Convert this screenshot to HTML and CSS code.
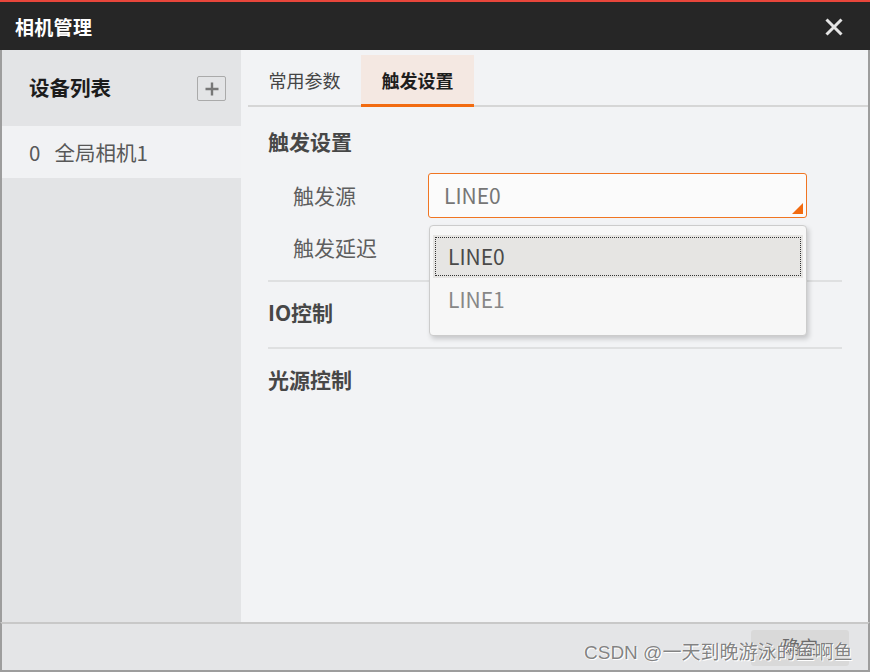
FILE: index.html
```html
<!DOCTYPE html>
<html lang="zh-CN">
<head>
<meta charset="utf-8">
<title>相机管理</title>
<link rel="stylesheet" href="styles.css">
</head>
<body>
<div class="window">
  <div class="titlebar">
    <span class="title">相机管理</span>
    <svg class="close" width="20" height="20" viewBox="0 0 20 20"><path d="M2.5 2.5 L17.5 17.5 M17.5 2.5 L2.5 17.5" stroke="#e4e4e4" stroke-width="3" stroke-linecap="butt"/></svg>
  </div>
  <div class="main">
    <aside class="sidebar">
      <div class="side-head">
        <span class="side-title">设备列表</span>
        <span class="add-btn"><svg width="16" height="16" viewBox="0 0 16 16"><path d="M8 1.5 V14.5 M1.5 8 H14.5" stroke="#777" stroke-width="2.4"/></svg></span>
      </div>
      <div class="side-item"><span class="idx">0</span><span>全局相机1</span></div>
    </aside>
    <section class="content">
      <div class="tabs">
        <div class="tab">常用参数</div>
        <div class="tab active">触发设置</div>
      </div>
      <div class="group first">
        <div class="group-title">触发设置</div>
        <div class="row">
          <span class="label">触发源</span>
          <div class="select-wrap">
            <div class="select"><span>LINE0</span><span class="corner"></span></div>
            <div class="popup">
              <div class="opt selected">LINE0</div>
              <div class="opt">LINE1</div>
            </div>
          </div>
        </div>
        <div class="row">
          <span class="label">触发延迟</span>
        </div>
      </div>
      <div class="sep"></div>
      <div class="group">
        <div class="group-title">IO控制</div>
      </div>
      <div class="sep"></div>
      <div class="group">
        <div class="group-title">光源控制</div>
      </div>
    </section>
  </div>
  <div class="footer">
    <button class="ok">确定</button>
    <span class="watermark">CSDN @一天到晚游泳的鱼啊鱼</span>
  </div>
</div>
</body>
</html>
```

FILE: styles.css
```css
* { box-sizing: border-box; }
html, body { margin: 0; padding: 0; }
body {
  width: 870px;
  height: 672px;
  overflow: hidden;
  font-family: "Noto Sans CJK SC", "Noto Sans", sans-serif;
  background: #e4e5e7;
}
.window {
  width: 870px;
  height: 672px;
  display: flex;
  flex-direction: column;
  border-top: 2px solid #e8463b;
}
.titlebar {
  height: 48px;
  flex: none;
  background: #262626;
  display: flex;
  align-items: center;
  justify-content: space-between;
  padding: 0 26px 0 15px;
}
.title {
  color: #ffffff;
  font-size: 19px;
  font-weight: 700;
  letter-spacing: 0.3px;
}
.close { display: block; margin-top: 1px; }
.main {
  height: 572px;
  flex: none;
  display: flex;
  border-left: 2px solid #9d9d9d;
  border-right: 2px solid #9d9d9d;
}
.sidebar {
  width: 239px;
  flex: none;
  background: #e3e4e6;
}
.side-head {
  height: 76px;
  display: flex;
  align-items: center;
  justify-content: space-between;
  padding: 0 15px 0 27px;
}
.side-title {
  font-size: 20.5px;
  font-weight: 700;
  color: #1c1c1c;
  margin-top: -2px;
}
.add-btn {
  width: 29px;
  height: 25px;
  border: 1.5px solid #aaaaaa;
  border-radius: 2px;
  display: flex;
  align-items: center;
  justify-content: center;
  margin-top: 1px;
}
.add-btn svg { display: block; }
.side-item {
  height: 52px;
  background: #f1f2f4;
  display: flex;
  align-items: center;
  padding-left: 27px;
  font-size: 20.5px;
  color: #585858;
  gap: 14px;
}
.content {
  flex: 1;
  background: #f2f3f5;
  display: flex;
  flex-direction: column;
}
.tabs {
  height: 57px;
  display: flex;
  align-items: flex-end;
  margin-left: 7px;
  margin-right: 0;
  border-bottom: 2px solid #d6d6d6;
}
.tab {
  height: 52px;
  padding: 0 20.5px;
  display: flex;
  align-items: center;
  font-size: 18px;
  color: #444;
  border-bottom: 3px solid transparent;
  margin-bottom: -2px;
}
.tab.active {
  background: #f4e8e2;
  border-bottom-color: #f26b10;
  color: #1e1e1e;
  font-weight: 700;
}
.group {
  margin: 0 26px 0 27px;
  padding: 12px 0 13px;
}
.group.first {
  padding: 16px 0 7px;
}
.group-title {
  height: 40px;
  line-height: 37px;
  font-size: 21px;
  font-weight: 700;
  color: #474747;
}
.group.first .group-title { margin-bottom: 6px; }
.row {
  height: 52px;
  display: flex;
  align-items: center;
  padding-left: 25px;
}
.label {
  width: 135px;
  flex: none;
  font-size: 21px;
  color: #5e5e5e;
}
.select-wrap {
  position: relative;
  width: 379px;
}
.select {
  height: 45px;
  border: 1.5px solid #f07522;
  border-radius: 3px;
  background: #fbfbfb;
  display: flex;
  align-items: center;
  padding-left: 15px;
  font-size: 21px;
  color: #767676;
  position: relative;
}
.corner {
  position: absolute;
  right: 3px;
  bottom: 3px;
  width: 0;
  height: 0;
  border-left: 11px solid transparent;
  border-bottom: 11px solid #f26b10;
}
.popup {
  position: absolute;
  left: 1px;
  top: 52px;
  width: 378px;
  height: 111px;
  background: #f7f7f7;
  border: 1px solid #cccccc;
  border-radius: 4px;
  box-shadow: 2px 3px 5px rgba(0,0,0,0.18);
  padding: 9px 3px 0;
  z-index: 5;
}
.opt {
  height: 43px;
  display: flex;
  align-items: center;
  padding-left: 15px;
  font-size: 21px;
  color: #878787;
}
.opt.selected {
  background: #e6e5e3;
  color: #4a4a4a;
  outline: 1px dotted #333;
  outline-offset: -3px;
}
.sep {
  height: 2px;
  background: #dfe0e1;
  margin: 0 26px 0 27px;
}
.footer {
  height: 50px;
  flex: none;
  background: #e4e5e7;
  border-top: 2px solid #c8c8c8;
  border-left: 2px solid #9d9d9d;
  border-right: 2px solid #9d9d9d;
  border-bottom: 2px solid #9d9d9d;
  display: flex;
  align-items: center;
  justify-content: flex-end;
  padding-right: 19px;
  position: relative;
}
.ok {
  width: 98px;
  height: 36px;
  margin-top: 2px;
  background: #d9d9d9;
  border: none;
  border-radius: 3px;
  font-family: "Noto Sans CJK SC", sans-serif;
  font-size: 18px;
  color: #6a6a6a;
  padding: 0 0 4px;
}
.watermark {
  position: absolute;
  left: 582px;
  top: 18px;
  font-size: 19px;
  font-family: "Liberation Sans", "Noto Sans CJK SC", sans-serif;
  color: rgba(110,110,110,0.85);
  text-shadow: 1px 1px 0 #ffffff, -1px 0 0 rgba(255,255,255,0.6);
  white-space: nowrap;
  line-height: 22px;
}
```
